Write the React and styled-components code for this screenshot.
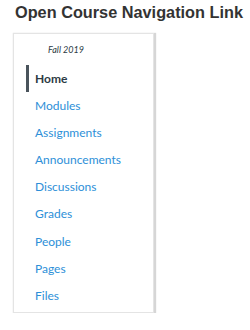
import React from 'react'
import styled, { createGlobalStyle } from 'styled-components'

const Global = createGlobalStyle`
  body {
    margin: 0;
    background: #ffffff;
  }
`

const Page = styled.div`
  padding: 2px 0 0 15px;
`

const Title = styled.h1`
  margin: 0;
  font-family: "Liberation Sans", Arial, sans-serif;
  font-size: 16.3px;
  font-weight: bold;
  color: #333333;
  line-height: 20px;
`

const Card = styled.nav`
  margin: 11px 0 0 -2px;
  width: 141px;
  box-sizing: border-box;
  border: 1px solid #e4e4e4;
  box-shadow: 1px 1px 1px 1px rgba(0, 0, 0, 0.16);
  padding: 10px 0 3px 0;
  font-family: Lato, "Noto Sans", sans-serif;
`

const Term = styled.p`
  margin: 0 0 9px 0;
  padding: 0 0 0 34px;
  font-size: 9px;
  font-style: italic;
  color: #2d3b45;
  line-height: 12px;
`

const List = styled.ul`
  list-style: none;
  margin: 0;
  padding: 0;
`

const Item = styled.li`
  position: relative;
  padding-left: 21px;
  height: 27.1px;
  line-height: 27px;
  font-size: 12px;
  font-weight: ${p => (p.$active ? 700 : 400)};
  color: ${p => (p.$active ? '#2d3b45' : '#2d8fd8')};

  &::before {
    content: '';
    display: ${p => (p.$active ? 'block' : 'none')};
    position: absolute;
    left: 12px;
    top: 0;
    width: 3px;
    height: 27px;
    background: #4a545c;
  }
`

const links = ['Home', 'Modules', 'Assignments', 'Announcements', 'Discussions', 'Grades', 'People', 'Pages', 'Files']

export default function App() {
  return (
    <Page>
      <Global />
      <Title>Open Course Navigation Link</Title>
      <Card>
        <Term>Fall 2019</Term>
        <List>
          {links.map((l, i) => (
            <Item key={l} $active={i === 0}>{l}</Item>
          ))}
        </List>
      </Card>
    </Page>
  )
}
